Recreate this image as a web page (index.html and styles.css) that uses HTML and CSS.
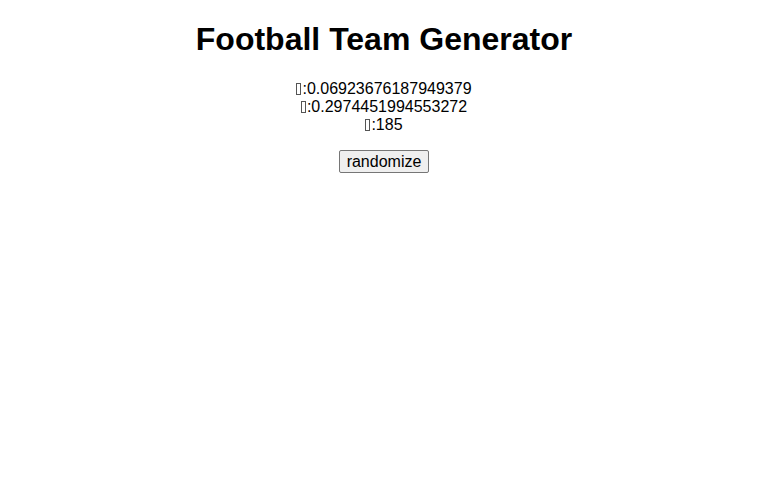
FILE: index.html
```html
<!DOCTYPE html>
<html>
<head>
	<meta http-equiv="Content-Type" content="text/html;charset=utf-8"/>
	<title>Football Team Generator</title>
	<link rel="stylesheet" href="styles.css">
</head>
<body>
	<h1 class="title">Football Team Generator</h1>
	<div class="stats">
		<div class="stat"><span class="glyph"></span>:0.06923676187949379</div>
		<div class="stat"><span class="glyph"></span>:0.2974451994553272</div>
		<div class="stat"><span class="glyph"></span>:185</div>
	</div>
	<p class="actions">
		<button class="btn" type="button">randomize</button>
	</p>
</body>
</html>
```
FILE: styles.css
```css
body{
	margin: 0 8px;
	font-family: "Liberation Sans", Arial, sans-serif;
	text-align: center;
	color: #000;
	background: #fff;
}
.title{
	font-size: 32px;
	margin: 21.44px 0;
}
.stats{
	font-size: 16px;
	line-height: 18px;
}
/* placeholder box for the missing emoji glyph */
.glyph{
	display: inline-block;
	width: 3px;
	height: 10px;
	border: 1px solid #555;
	margin-right: 1px;
	vertical-align: -1px;
}
.actions{
	margin: 16px 0;
}
.btn{
	font-family: "Liberation Sans", Arial, sans-serif;
	font-size: 16px;
	padding: 1px 7px;
	line-height: 19px;
	border: 1px solid #767676;
	border-radius: 2px;
	background: #efefef;
	color: #000;
}
```
